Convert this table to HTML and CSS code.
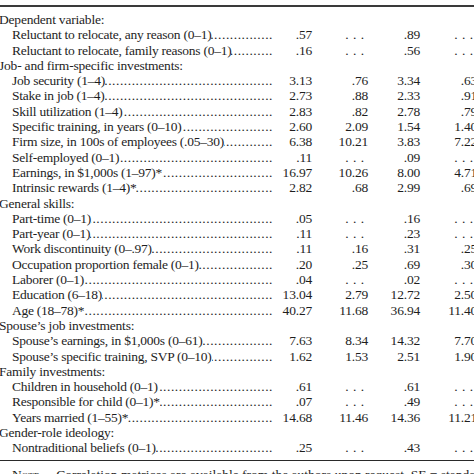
FILE: index.html
```html
<!DOCTYPE html>
<html>
<head>
<meta charset="utf-8">
<link rel="stylesheet" href="styles.css">
</head>
<body>
<div class="page">
  <div class="rule-top"></div>
  <div class="rows">
    <div class="row head"><span class="lab">Dependent variable:</span></div>
    <div class="row"><span class="lab item"><span class="t">Reluctant to relocate, any reason (0–1)</span><span class="ld"></span></span><span class="n">.57</span><span class="n e">. . .</span><span class="n">.89</span><span class="n e">. . .</span></div>
    <div class="row"><span class="lab item"><span class="t">Reluctant to relocate, family reasons (0–1)</span><span class="ld"></span></span><span class="n">.16</span><span class="n e">. . .</span><span class="n">.56</span><span class="n e">. . .</span></div>
    <div class="row head"><span class="lab">Job- and firm-specific investments:</span></div>
    <div class="row"><span class="lab item"><span class="t">Job security (1–4)</span><span class="ld"></span></span><span class="n">3.13</span><span class="n">.76</span><span class="n">3.34</span><span class="n">.63</span></div>
    <div class="row"><span class="lab item"><span class="t">Stake in job (1–4)</span><span class="ld"></span></span><span class="n">2.73</span><span class="n">.88</span><span class="n">2.33</span><span class="n">.91</span></div>
    <div class="row"><span class="lab item"><span class="t">Skill utilization (1–4)</span><span class="ld"></span></span><span class="n">2.83</span><span class="n">.82</span><span class="n">2.78</span><span class="n">.79</span></div>
    <div class="row"><span class="lab item"><span class="t">Specific training, in years (0–10)</span><span class="ld"></span></span><span class="n">2.60</span><span class="n">2.09</span><span class="n">1.54</span><span class="n">1.40</span></div>
    <div class="row"><span class="lab item"><span class="t">Firm size, in 100s of employees (.05–30)</span><span class="ld"></span></span><span class="n">6.38</span><span class="n">10.21</span><span class="n">3.83</span><span class="n">7.22</span></div>
    <div class="row"><span class="lab item"><span class="t">Self-employed (0–1)</span><span class="ld"></span></span><span class="n">.11</span><span class="n e">. . .</span><span class="n">.09</span><span class="n e">. . .</span></div>
    <div class="row"><span class="lab item"><span class="t">Earnings, in $1,000s (1–97)*</span><span class="ld"></span></span><span class="n">16.97</span><span class="n">10.26</span><span class="n">8.00</span><span class="n">4.71</span></div>
    <div class="row"><span class="lab item"><span class="t">Intrinsic rewards (1–4)*</span><span class="ld"></span></span><span class="n">2.82</span><span class="n">.68</span><span class="n">2.99</span><span class="n">.69</span></div>
    <div class="row head"><span class="lab">General skills:</span></div>
    <div class="row"><span class="lab item"><span class="t">Part-time (0–1)</span><span class="ld"></span></span><span class="n">.05</span><span class="n e">. . .</span><span class="n">.16</span><span class="n e">. . .</span></div>
    <div class="row"><span class="lab item"><span class="t">Part-year (0–1)</span><span class="ld"></span></span><span class="n">.11</span><span class="n e">. . .</span><span class="n">.23</span><span class="n e">. . .</span></div>
    <div class="row"><span class="lab item"><span class="t">Work discontinuity (0–.97)</span><span class="ld"></span></span><span class="n">.11</span><span class="n">.16</span><span class="n">.31</span><span class="n">.25</span></div>
    <div class="row"><span class="lab item"><span class="t">Occupation proportion female (0–1)</span><span class="ld"></span></span><span class="n">.20</span><span class="n">.25</span><span class="n">.69</span><span class="n">.30</span></div>
    <div class="row"><span class="lab item"><span class="t">Laborer (0–1)</span><span class="ld"></span></span><span class="n">.04</span><span class="n e">. . .</span><span class="n">.02</span><span class="n e">. . .</span></div>
    <div class="row"><span class="lab item"><span class="t">Education (6–18)</span><span class="ld"></span></span><span class="n">13.04</span><span class="n">2.79</span><span class="n">12.72</span><span class="n">2.50</span></div>
    <div class="row"><span class="lab item"><span class="t">Age (18–78)*</span><span class="ld"></span></span><span class="n">40.27</span><span class="n">11.68</span><span class="n">36.94</span><span class="n">11.40</span></div>
    <div class="row head"><span class="lab">Spouse’s job investments:</span></div>
    <div class="row"><span class="lab item"><span class="t">Spouse’s earnings, in $1,000s (0–61)</span><span class="ld"></span></span><span class="n">7.63</span><span class="n">8.34</span><span class="n">14.32</span><span class="n">7.70</span></div>
    <div class="row"><span class="lab item"><span class="t">Spouse’s specific training, SVP (0–10)</span><span class="ld"></span></span><span class="n">1.62</span><span class="n">1.53</span><span class="n">2.51</span><span class="n">1.90</span></div>
    <div class="row head"><span class="lab">Family investments:</span></div>
    <div class="row"><span class="lab item"><span class="t">Children in household (0–1)</span><span class="ld"></span></span><span class="n">.61</span><span class="n e">. . .</span><span class="n">.61</span><span class="n e">. . .</span></div>
    <div class="row"><span class="lab item"><span class="t">Responsible for child (0–1)*</span><span class="ld"></span></span><span class="n">.07</span><span class="n e">. . .</span><span class="n">.49</span><span class="n e">. . .</span></div>
    <div class="row"><span class="lab item"><span class="t">Years married (1–55)*</span><span class="ld"></span></span><span class="n">14.68</span><span class="n">11.46</span><span class="n">14.36</span><span class="n">11.21</span></div>
    <div class="row head"><span class="lab">Gender-role ideology:</span></div>
    <div class="row"><span class="lab item"><span class="t">Nontraditional beliefs (0–1)</span><span class="ld"></span></span><span class="n">.25</span><span class="n e">. . .</span><span class="n">.43</span><span class="n e">. . .</span></div>
  </div>
  <div class="rule-bottom"></div>
  <div class="note"><span class="sc">Note</span>.—Correlation matrices are available from the authors upon request. SE = standard deviation.</div>
</div>
</body>
</html>
```
FILE: styles.css
```css
html, body {
  margin: 0;
  padding: 0;
  background: #ffffff;
  overflow: hidden;
}
.page {
  width: 478px;
  margin-left: -1px;
  padding-top: 5px;
  font-family: "Liberation Serif", "Times New Roman", serif;
  font-size: 13.5px;
  color: #1e1e1e;
}
.rule-top {
  height: 2px;
  background: #3a3a3a;
  margin-bottom: 5px;
}
.rows {
  display: flex;
  flex-direction: column;
}
.row {
  display: grid;
  grid-template-columns: 274px 39px 56px 52px 57px;
  height: 15.3px;
  line-height: 15.3px;
  white-space: nowrap;
}
.head .lab {
  grid-column: 1 / -1;
}
.lab {
  display: flex;
  min-width: 0;
  overflow: hidden;
}
.t {
  letter-spacing: -0.25px;
}
.head .lab {
  letter-spacing: -0.2px;
}
.item {
  padding-left: 13px;
}
.t {
  flex: none;
}
.ld {
  flex: 1;
  min-width: 0;
  overflow: hidden;
  direction: rtl;
  text-align: right;
  letter-spacing: 0.55px;
  padding-left: 2px;
}
.ld::after {
  content: "..................................................................................................................................................................";
}
.n {
  text-align: right;
  letter-spacing: -0.2px;
}
.e {
  padding-right: 4px;
  letter-spacing: 0;
  word-spacing: 1px;
}
.rule-bottom {
  height: 1.5px;
  background: #2a2a2a;
  margin-top: 4px;
}
.note {
  margin-top: 6px;
  padding-left: 13px;
  line-height: 15px;
  white-space: nowrap;
}
.sc {
  font-variant: small-caps;
}
```
